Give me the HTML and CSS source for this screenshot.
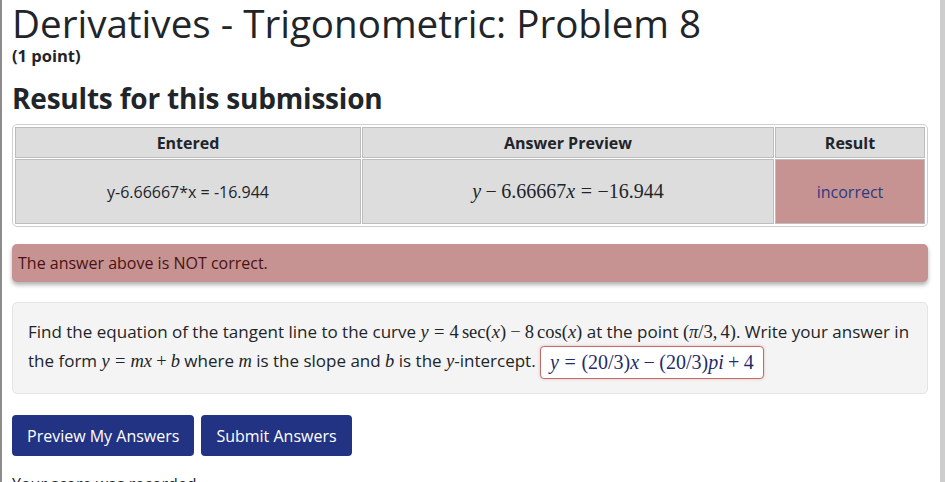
FILE: index.html
```html
<!DOCTYPE html>
<html>
<head>
<meta charset="utf-8">
<link rel="stylesheet" href="styles.css">
</head>
<body>
<div class="page">
  <div class="content">
    <h1 class="title">Derivatives - Trigonometric: Problem 8</h1>
    <div class="points">(1 point)</div>
    <h2 class="results-h">Results for this submission</h2>
    <div class="table-wrap">
      <table class="results">
        <thead>
          <tr>
            <th class="c1">Entered</th>
            <th class="c2">Answer Preview</th>
            <th class="c3">Result</th>
          </tr>
        </thead>
        <tbody>
          <tr>
            <td>y-6.66667*x = -16.944</td>
            <td class="math"><i>y</i><span class="bin">&minus;</span>6.66667<i>x</i><span class="rel">=</span>&minus;16.944</td>
            <td class="incorrect">incorrect</td>
          </tr>
        </tbody>
      </table>
    </div>
    <div class="alert">The answer above is NOT correct.</div>
    <div class="problem">
      <p>Find the equation of the tangent line to the curve <span class="m"><i>y</i><span class="rel">=</span>4<span class="thin"></span>sec(<i>x</i>)<span class="bin">&minus;</span>8<span class="thin"></span>cos(<i>x</i>)</span> at the point <span class="m">(<i>&pi;</i>/3,<span class="thin"></span>4)</span>. Write your answer in the form <span class="m"><i>y</i><span class="rel">=</span><i>mx</i><span class="bin">+</span><i>b</i></span> where <span class="m"><i>m</i></span> is the slope and <span class="m"><i>b</i></span> is the <span class="m"><i>y</i></span>-intercept. <span class="answer"><i>y</i><span class="rel">=</span>(20/3)<i>x</i><span class="bin">&minus;</span>(20/3)<i>pi</i><span class="bin">+</span>4</span></p>
    </div>
    <div class="buttons">
      <button class="btn">Preview My Answers</button>
      <button class="btn">Submit Answers</button>
    </div>
    <p class="score">Your score was recorded.</p>
  </div>
  <div class="sidebar"></div>
</div>
</body>
</html>
```

FILE: styles.css
```css
html, body {
  margin: 0;
  padding: 0;
  background: #fff;
  height: 100%;
  overflow: hidden;
}
body {
  font-family: "Open Sans", "Noto Sans", sans-serif;
  color: #212529;
  font-size: 16px;
}
.page {
  display: flex;
  height: 482px;
}
.content {
  border-left: 2px solid #8c8c8c;
  padding: 0 12px 0 10px;
  width: 916px;
  flex: none;
}
.sidebar {
  width: 5px;
  background: #cdcdcd;
  flex: none;
}
.title {
  font-size: 38.6px;
  font-weight: 400;
  margin: 0;
  line-height: 46px;
}
.points {
  font-weight: 700;
  font-size: 16.5px;
  line-height: 20px;
}
.results-h {
  font-size: 28px;
  font-weight: 700;
  margin: 15px 0 9px;
  line-height: 34px;
  letter-spacing: -0.2px;
}
.table-wrap {
  border: 1px solid #cfcfcf;
  border-radius: 5px;
  padding: 1px;
}
.results {
  width: 100%;
  border-collapse: collapse;
  background: #fff;
}
.results th, .results td {
  background: #dddddd;
  border: 1px solid #fff;
  box-shadow: inset 0 0 0 1px #bdbdbd;
  text-align: center;
}
.results th {
  height: 29px;
  font-weight: 700;
  font-size: 16px;
}
.results td {
  height: 63px;
  font-size: 16px;
}
.c1 { width: 344px; }
.c2 { width: 410px; }
.results td.math {
  font-family: "Liberation Serif", "DejaVu Serif", serif;
  font-size: 20px;
}
.results td.incorrect {
  background: #c69392;
  color: #2d3a80;
  font-size: 16px;
}
.rel { margin: 0 0.28em; font-style: normal; }
.bin { margin: 0 0.22em; font-style: normal; }
.thin { display: inline-block; width: 0.17em; }
.alert {
  margin-top: 17px;
  background: #c69392;
  color: #4a1212;
  border-radius: 5px;
  padding: 0 6px;
  height: 38px;
  line-height: 38px;
  font-size: 16px;
  box-shadow: 0 3px 4px rgba(0,0,0,0.3);
}
.problem {
  margin-top: 20px;
  background: #f4f4f4;
  border: 1px solid #e4e4e4;
  border-radius: 5px;
  padding: 14px 15px 14px 15px;
}
.problem p {
  margin: 0;
  line-height: 29px;
  font-size: 17px;
}
.m {
  font-family: "Liberation Serif", "DejaVu Serif", serif;
  font-size: 18.5px;
  line-height: 20px;
}
.answer {
  display: inline-block;
  font-family: "Liberation Serif", "DejaVu Serif", serif;
  font-size: 20px;
  color: #1f2d6b;
  background: #fff;
  border: 1px solid #c56a6a;
  border-radius: 4px;
  padding: 0 9px;
  line-height: 31px;
  box-shadow: 0 0 3px rgba(200,80,80,0.35);
  vertical-align: middle;
}
.buttons {
  margin-top: 21px;
  display: flex;
  gap: 7px;
}
.btn {
  background: #233384;
  color: #fff;
  border: none;
  border-radius: 4px;
  font-family: "Open Sans", "Noto Sans", sans-serif;
  font-size: 16px;
  height: 41px;
  padding: 0 15px;
}
.score {
  margin: 17px 0 0;
  font-size: 16px;
}
```
